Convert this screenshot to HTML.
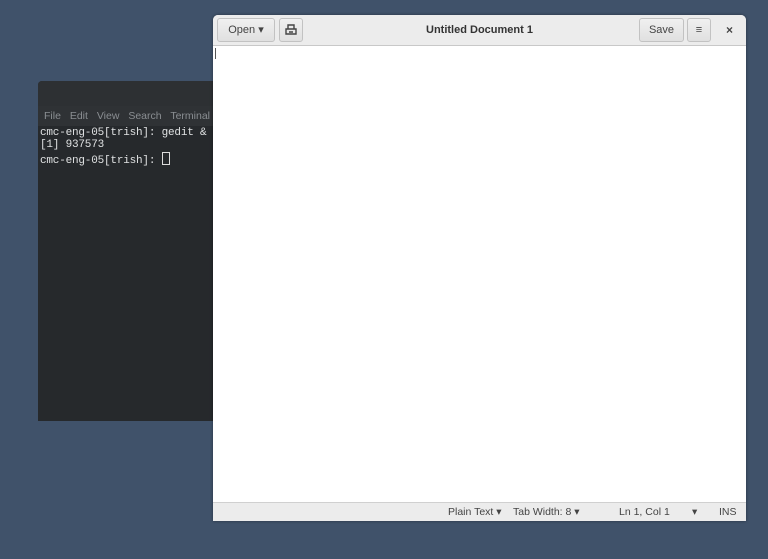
<!DOCTYPE html><html><head><style>
body{margin:0;width:768px;height:559px;background:#40526a;position:relative;overflow:hidden;font-family:"Liberation Sans",sans-serif}
.term{position:absolute;left:38px;top:81px;width:180px;height:340px;background:#26292c;border-radius:4px 0 0 0}
.tt{height:25px;background:#2d3033;border-radius:4px 0 0 0}
.tm{height:20px;background:#2f3235;color:#8a8e92;font-size:10.5px;line-height:20px;padding-left:6px;word-spacing:6px}
.tc{color:#dfe1e2;font-family:"Liberation Mono",monospace;font-size:11px;line-height:12.3px;padding:1px 2px;letter-spacing:-0.2px}
.cur{display:inline-block;width:6px;height:11px;border:1px solid #ddd;vertical-align:-2px}
.ged{position:absolute;left:213px;top:15px;width:533px;height:506px;background:#fff;border-radius:5px 5px 0 0;box-shadow:0 0 3px rgba(0,0,0,.4)}
.hd{height:30px;background:#ececec;border-bottom:1px solid #c8c8c8;border-radius:5px 5px 0 0;position:relative}
.b{position:absolute;top:3px;height:22px;border:1px solid #c2c2c2;border-radius:3px;background:linear-gradient(#f0f0f0,#e0e0e0);font-size:11px;color:#444;line-height:22px;text-align:center}
.ttl{position:absolute;left:0;right:0;top:0;text-align:center;line-height:30px;font-size:11px;font-weight:bold;color:#333}
.sb{position:absolute;left:0;right:0;bottom:0;height:18px;background:#ececec;border-top:1px solid #d0d0d0;font-size:10.5px;color:#444;line-height:18px}
.sb span{position:absolute}
</style></head><body>
<div class="term"><div class="tt"></div><div class="tm">File Edit View Search Terminal</div>
<div class="tc">cmc-eng-05[trish]: gedit &amp;<br>[1] 937573<br>cmc-eng-05[trish]: <span class="cur"></span></div></div>
<div class="ged"><div class="hd">
<div class="b" style="left:4px;width:56px">Open &#9662;</div>
<div class="b" style="left:66px;width:22px"><svg width="12" height="11" viewBox="0 0 12 11" style="margin-top:5px"><path d="M3 1h6v4h2v5H1V5h2z M3 5h6 M4 8h4" fill="none" stroke="#444" stroke-width="1.4"/></svg></div>
<div class="ttl">Untitled Document 1</div>
<div class="b" style="left:426px;width:43px">Save</div>
<div class="b" style="left:474px;width:22px">&#8801;</div>
<div style="position:absolute;left:513px;top:0;line-height:30px;font-size:12px;font-weight:bold;color:#444">&#215;</div>
</div>
<div style="position:absolute;left:2px;top:33px;width:1px;height:11px;background:#555"></div>
<div class="sb"><span style="left:235px">Plain Text &#9662;</span><span style="left:300px">Tab Width: 8 &#9662;</span><span style="left:406px">Ln 1, Col 1</span><span style="left:479px">&#9662;</span><span style="left:506px">INS</span></div>
</div>
</body></html>
